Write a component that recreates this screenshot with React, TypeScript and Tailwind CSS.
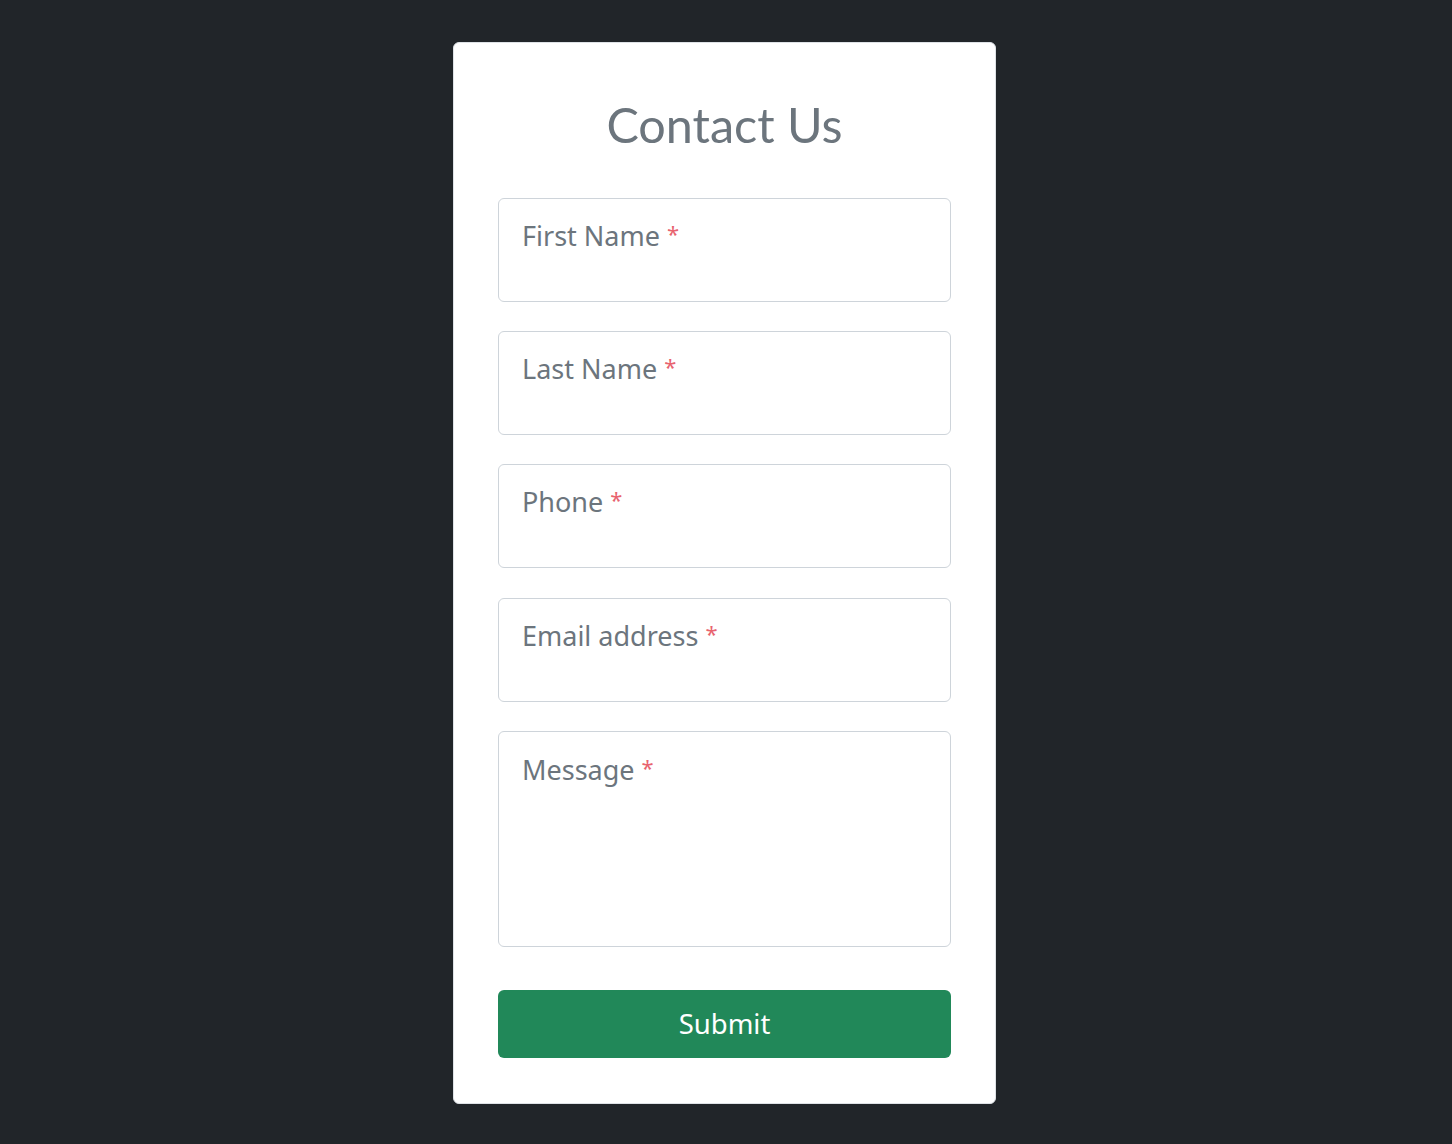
export default function App() {
  const fields = ["First Name", "Last Name", "Phone", "Email address"];

  return (
    <div className="min-h-screen bg-[#212529] pt-[42px] pb-[41px] pr-[3px]" style={{ fontFamily: "'Noto Sans', Lato, sans-serif" }}>
      <div className="mx-auto w-[543px] rounded-md border border-[#dee2e6] bg-white px-[44px] pt-[50px] pb-[45px]">
        <h1 className="text-center text-[48.5px] leading-[62px] font-normal text-[#6c757d]" style={{ fontFamily: "Lato, sans-serif" }}>
          Contact Us
        </h1>

        <form className="mt-[43px] flex flex-col gap-[29.2px]">
          {fields.map((f) => (
            <div key={f} className="h-[104px] rounded-md border border-[#ced4da] px-[23px] pt-[21px]">
              <label className="text-[27px] leading-[32px] text-[#6c757d]">
                {f} <span className="relative -top-[4px] text-[22px] text-[#e8636f]">*</span>
              </label>
            </div>
          ))}
          <div className="h-[216px] rounded-md border border-[#ced4da] px-[23px] pt-[22px]">
            <label className="text-[27px] leading-[32px] text-[#6c757d]">
              Message <span className="relative -top-[4px] text-[22px] text-[#e8636f]">*</span>
            </label>
          </div>
          <button type="button" className="mt-[14px] h-[68px] rounded-md bg-[#218859] text-[27.5px] text-white">
            Submit
          </button>
        </form>
      </div>
    </div>
  );
}
